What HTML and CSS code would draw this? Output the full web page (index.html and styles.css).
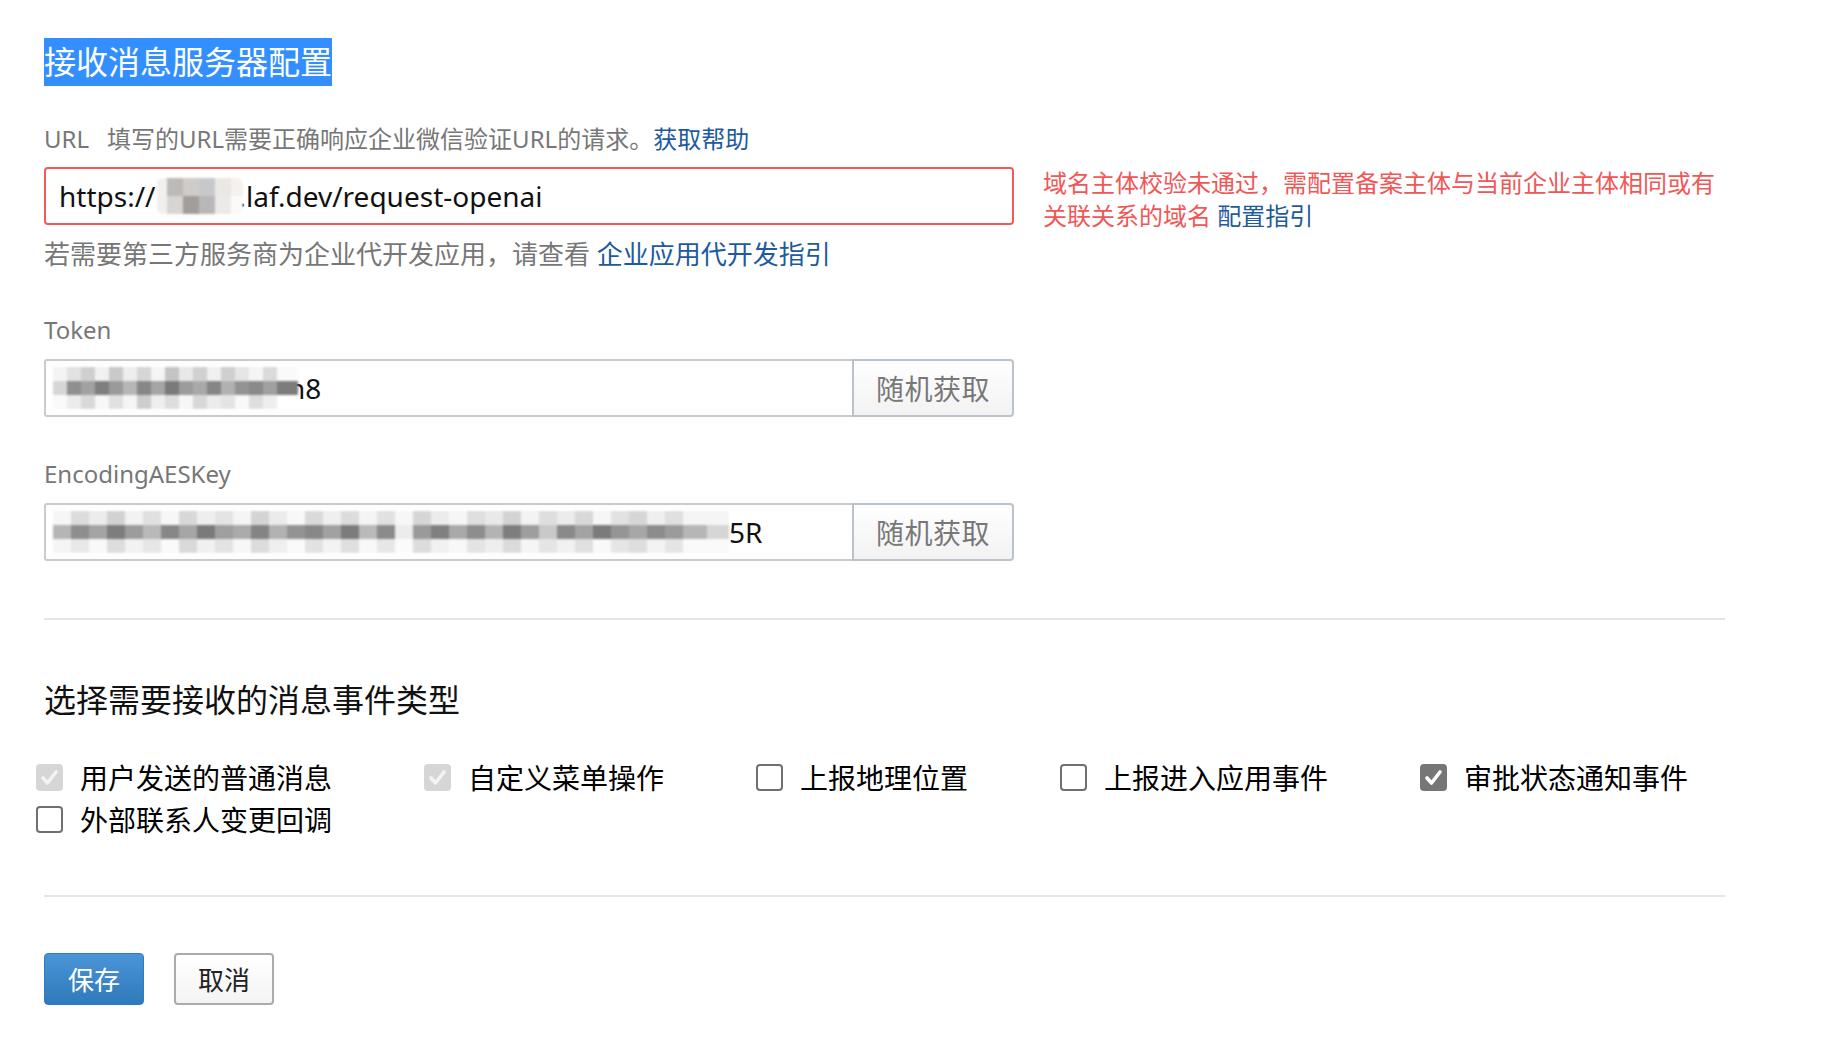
FILE: index.html
```html
<!DOCTYPE html>
<html lang="zh-CN">
<head>
<meta charset="utf-8">
<title>接收消息服务器配置</title>
<link rel="stylesheet" href="styles.css">
</head>
<body>
<div class="page">
  <h2 class="title"><span class="sel">接收消息服务器配置</span></h2>

  <div class="label-line"><span class="lbl">URL</span><span class="hint">填写的URL需要正确响应企业微信验证URL的请求。<a class="link">获取帮助</a></span></div>
  <div class="url-row">
    <div class="input input-error"><span>https://</span><span class="mosaic m-url"></span><span>.laf.dev/request-openai</span></div>
    <div class="err-msg">域名主体校验未通过，需配置备案主体与当前企业主体相同或有<br>关联关系的域名 <a class="link">配置指引</a></div>
  </div>
  <div class="help">若需要第三方服务商为企业代开发应用，请查看 <a class="link">企业应用代开发指引</a></div>

  <div class="label-line label-token"><span class="lbl">Token</span></div>
  <div class="key-row">
    <div class="input input-key"><span class="mosaic m-token"></span><span>n8</span></div>
    <div class="rand-btn">随机获取</div>
  </div>

  <div class="label-line label-aes"><span class="lbl">EncodingAESKey</span></div>
  <div class="key-row">
    <div class="input input-key"><span class="mosaic m-aes"></span><span>5R</span></div>
    <div class="rand-btn">随机获取</div>
  </div>

  <div class="divider div-1"></div>

  <h3 class="sub-title">选择需要接收的消息事件类型</h3>

  <div class="events">
    <label class="ev"><span class="cb cb-dis"><svg viewBox="0 0 27 27"><path d="M7 14 L11.5 19 L20 8" /></svg></span><span class="ev-text">用户发送的普通消息</span></label>
    <label class="ev"><span class="cb cb-dis"><svg viewBox="0 0 27 27"><path d="M7 14 L11.5 19 L20 8" /></svg></span><span class="ev-text">自定义菜单操作</span></label>
    <label class="ev"><span class="cb cb-off"></span><span class="ev-text">上报地理位置</span></label>
    <label class="ev"><span class="cb cb-off"></span><span class="ev-text">上报进入应用事件</span></label>
    <label class="ev"><span class="cb cb-on"><svg viewBox="0 0 27 27"><path d="M7 14 L11.5 19 L20 8" /></svg></span><span class="ev-text">审批状态通知事件</span></label>
    <label class="ev"><span class="cb cb-off"></span><span class="ev-text">外部联系人变更回调</span></label>
  </div>

  <div class="divider div-2"></div>

  <div class="actions">
    <button class="btn btn-primary">保存</button>
    <button class="btn btn-default">取消</button>
  </div>
</div>
</body>
</html>
```

FILE: styles.css
```css
html, body {
  margin: 0;
  padding: 0;
  background: #fff;
}

body {
  font-family: "Noto Sans", "Noto Sans CJK SC", sans-serif;
  color: #111;
}

.page {
  padding: 38px 0 0 44px;
  width: 1681px;
}

.title {
  margin: 0;
  font-size: 32px;
  font-weight: normal;
  line-height: 48px;
  height: 48px;
}

.sel {
  display: inline-block;
  background: #338fff;
  color: #fff;
  height: 48px;
}

.label-line {
  margin-top: 37px;
  font-size: 24px;
  line-height: 32px;
  height: 32px;
  color: #777;
  white-space: nowrap;
}

.hint {
  margin-left: 18px;
}

.link {
  color: #1e5a9c;
  text-decoration: none;
  cursor: pointer;
}

.url-row {
  margin-top: 12px;
  height: 58px;
  display: flex;
  align-items: flex-start;
}

.input {
  box-sizing: border-box;
  height: 58px;
  border: 2px solid #cacaca;
  display: flex;
  align-items: center;
  padding-left: 13px;
  font-size: 28px;
  color: #111;
  white-space: nowrap;
  overflow: hidden;
}

.input-error {
  width: 970px;
  border-color: #f15b5b;
  border-radius: 4px;
  flex: none;
}

.err-msg {
  margin-left: 29px;
  margin-top: -1px;
  font-size: 24px;
  line-height: 33px;
  color: #f05757;
  white-space: nowrap;
}

.help {
  margin-top: 12px;
  font-size: 26px;
  line-height: 34px;
  height: 34px;
  color: #777;
  white-space: nowrap;
}

.label-token {
  margin-top: 43px;
}

.label-aes {
  margin-top: 41px;
}

.key-row {
  margin-top: 13px;
  width: 970px;
  display: flex;
  height: 58px;
}

.input-key {
  flex: 1;
  border-right: none;
  border-radius: 3px 0 0 3px;
}

.rand-btn {
  box-sizing: border-box;
  width: 162px;
  height: 58px;
  flex: none;
  border: 2px solid #bac3cc;
  border-radius: 0 4px 4px 0;
  background: linear-gradient(#ffffff, #f2f2f2);
  color: #787878;
  font-size: 28px;
  display: flex;
  align-items: center;
  justify-content: center;
  letter-spacing: 0.5px;
}

/* pixelated redaction blocks */
.mosaic {
  display: inline-block;
  flex: none;
  position: relative;
  z-index: 1;
  filter: blur(0.8px);
}

.m-url {
  width: 86px;
  height: 36px;
  margin: 0 -4px 0 1px;
  background:
    linear-gradient(90deg, #f2f0ee 0 10px, #bdb9b7 10px 26px, #cfcbc9 26px 42px, #c6c9cc 42px 58px, #ebe8e4 58px 74px, #f4f1ee 74px 86px) top / 100% 50% no-repeat,
    linear-gradient(90deg, #f2f0ee 0 10px, #d8d4d2 10px 26px, #a19d9b 26px 42px, #b9b7b8 42px 58px, #eceae8 58px 74px, #fbfaf9 74px 86px) bottom / 100% 50% no-repeat;
  border-radius: 6px;
}

.m-token {
  width: 245px;
  height: 42px;
  margin-left: -6px;
  margin-right: -10px;
  background:
    linear-gradient(90deg, #f4f4f4 0 14px, #e2e2e2 14px 28px, #cfcfcf 28px 42px, #f1f1f1 42px 56px, #c9c9c9 56px 70px, #ededed 70px 84px, #d5d5d5 84px 98px, #f5f5f5 98px 112px, #c4c4c4 112px 126px, #e8e8e8 126px 140px, #d0d0d0 140px 154px, #f0f0f0 154px 168px, #cfcfcf 168px 182px, #e6e6e6 182px 196px, #f5f5f5 196px 210px, #dadada 210px 224px, #fafafa 224px) top / 100% 33% no-repeat,
    linear-gradient(90deg, #d6d6d6 0 14px, #8f8f8f 14px 28px, #a2a2a2 28px 42px, #7f7f7f 42px 56px, #9a9a9a 56px 70px, #b6b6b6 70px 84px, #878787 84px 98px, #a5a5a5 98px 112px, #7a7a7a 112px 126px, #9c9c9c 126px 140px, #a9a9a9 140px 154px, #868686 154px 168px, #b1b1b1 168px 182px, #939393 182px 196px, #8a8a8a 196px 210px, #a0a0a0 210px 224px, #7c7c7c 224px) center / 100% 34% no-repeat,
    linear-gradient(90deg, #fafafa 0 14px, #ececec 14px 28px, #d9d9d9 28px 42px, #f7f7f7 42px 56px, #e0e0e0 56px 70px, #f5f5f5 70px 84px, #cdcdcd 84px 98px, #eeeeee 98px 112px, #dddddd 112px 126px, #f6f6f6 126px 140px, #d8d8d8 140px 154px, #ececec 154px 168px, #e4e4e4 168px 182px, #f9f9f9 182px 196px, #dedede 196px 210px, #eeeeee 210px 224px, #ffffff 224px) bottom / 100% 33% no-repeat;
}

.m-aes {
  width: 676px;
  height: 42px;
  margin-left: -6px;
  background:
    linear-gradient(90deg, #f6f6f6 0 18px, #dcdcdc 18px 36px, #ececec 36px 54px, #d2d2d2 54px 72px, #f2f2f2 72px 90px, #e0e0e0 90px 108px, #f7f7f7 108px 126px, #d8d8d8 126px 144px, #eeeeee 144px 162px, #e4e4e4 162px 180px, #f5f5f5 180px 198px, #d4d4d4 198px 216px, #ebebeb 216px 234px, #f8f8f8 234px 252px, #dadada 252px 270px, #efefef 270px 288px, #dcdcdc 288px 306px, #f4f4f4 306px 324px, #e1e1e1 324px 342px, #f7f7f7 342px 360px, #d6d6d6 360px 378px, #ececec 378px 396px, #f6f6f6 396px 414px, #dfdfdf 414px 432px, #e9e9e9 432px 450px, #d3d3d3 450px 468px, #f3f3f3 468px 486px, #dedede 486px 504px, #ececec 504px 522px, #d8d8d8 522px 540px, #f6f6f6 540px 558px, #e2e2e2 558px 576px, #d6d6d6 576px 594px, #efefef 594px 612px, #e0e0e0 612px 630px, #f5f5f5 630px) top / 100% 33% no-repeat,
    linear-gradient(90deg, #b5b5b5 0 18px, #8e8e8e 18px 36px, #a4a4a4 36px 54px, #7d7d7d 54px 72px, #9c9c9c 72px 90px, #b9b9b9 90px 108px, #878787 108px 126px, #a6a6a6 126px 144px, #7a7a7a 144px 162px, #9f9f9f 162px 180px, #ababab 180px 198px, #848484 198px 216px, #b2b2b2 216px 234px, #939393 234px 252px, #888888 252px 270px, #a1a1a1 270px 288px, #7c7c7c 288px 306px, #bababa 306px 324px, #8b8b8b 324px 342px, #ececec 342px 360px, #9a9a9a 360px 378px, #808080 378px 396px, #a9a9a9 396px 414px, #8d8d8d 414px 432px, #b3b3b3 432px 450px, #7e7e7e 450px 468px, #9e9e9e 468px 486px, #c9c9c9 486px 504px, #8a8a8a 504px 522px, #a3a3a3 522px 540px, #7b7b7b 540px 558px, #959595 558px 576px, #a7a7a7 576px 594px, #8c8c8c 594px 612px, #9b9b9b 612px 630px, #b6b6b6 630px 654px, #d6d6d6 654px) center / 100% 34% no-repeat,
    linear-gradient(90deg, #f5f5f5 0 18px, #e8e8e8 18px 36px, #f9f9f9 36px 54px, #dddddd 54px 72px, #f2f2f2 72px 90px, #e6e6e6 90px 108px, #fafafa 108px 126px, #d9d9d9 126px 144px, #f0f0f0 144px 162px, #e3e3e3 162px 180px, #f7f7f7 180px 198px, #dcdcdc 198px 216px, #efefef 216px 234px, #fafafa 234px 252px, #e2e2e2 252px 270px, #f3f3f3 270px 288px, #dfdfdf 288px 306px, #f8f8f8 306px 324px, #e7e7e7 324px 342px, #fbfbfb 342px 360px, #dcdcdc 360px 378px, #f1f1f1 378px 396px, #f8f8f8 396px 414px, #e4e4e4 414px 432px, #eeeeee 432px 450px, #dbdbdb 450px 468px, #f5f5f5 468px 486px, #e5e5e5 486px 504px, #f1f1f1 504px 522px, #e0e0e0 522px 540px, #f9f9f9 540px 558px, #e6e6e6 558px 576px, #dedede 576px 594px, #f3f3f3 594px 612px, #e5e5e5 612px 630px, #fafafa 630px) bottom / 100% 33% no-repeat;
}

.divider {
  height: 2px;
  background: #e4e4e9;
}

.div-1 {
  margin-top: 57px;
}

.sub-title {
  margin: 58px 0 0 0;
  font-size: 32px;
  font-weight: normal;
  line-height: 44px;
  color: #111;
}

.events {
  margin-top: 34px;
  margin-left: -8px;
  display: flex;
  flex-wrap: wrap;
  column-gap: 92px;
}

.ev {
  display: flex;
  align-items: center;
  height: 42px;
  font-size: 28px;
  color: #000;
  white-space: nowrap;
}

.cb {
  box-sizing: border-box;
  width: 27px;
  height: 27px;
  border-radius: 4px;
  margin-right: 17px;
  flex: none;
  display: flex;
}

.cb svg {
  width: 27px;
  height: 27px;
}

.cb svg path {
  fill: none;
  stroke-width: 3.6;
  stroke-linecap: round;
  stroke-linejoin: round;
}

.cb-off {
  border: 2px solid #707070;
  background: #fff;
}

.cb-dis {
  background: #d6d6d6;
}

.cb-dis svg path {
  stroke: #f3f3f3;
}

.cb-on {
  background: #767676;
}

.cb-on svg path {
  stroke: #ffffff;
}

.div-2 {
  margin-top: 55px;
}

.actions {
  margin-top: 56px;
  display: flex;
  gap: 30px;
}

.btn {
  box-sizing: border-box;
  width: 100px;
  height: 52px;
  border-radius: 4px;
  font-family: "Noto Sans", "Noto Sans CJK SC", sans-serif;
  font-size: 26px;
  padding: 0;
  cursor: pointer;
}

.btn-primary {
  border: 1px solid #2a7cc6;
  background: linear-gradient(#4a94d8, #2f7aba);
  color: #fff;
}

.btn-default {
  border: 2px solid #ababab;
  background: linear-gradient(#ffffff, #f4f4f4);
  color: #222;
}
```
